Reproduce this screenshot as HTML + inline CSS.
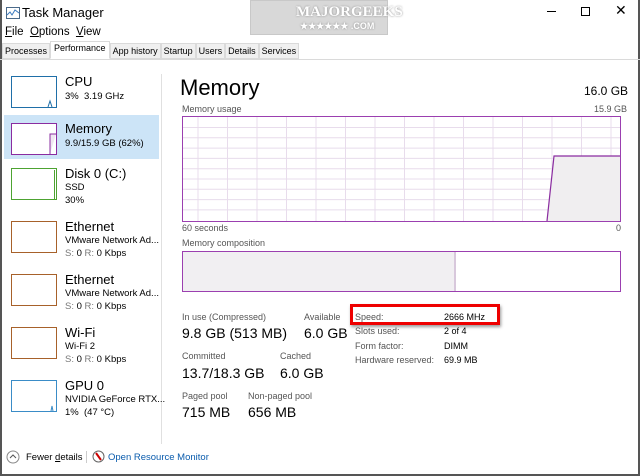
<!DOCTYPE html>
<html><head><style>
*{margin:0;padding:0;box-sizing:border-box}
body{width:640px;height:476px;background:#fff;font-family:"Liberation Sans",sans-serif;color:#000;position:relative;overflow:hidden}
.a{position:absolute;white-space:nowrap}
.th{position:absolute;left:11px;width:46px;height:32px;border:1px solid}
.t1{font-size:13px}
.t2{font-size:9.5px}
.lbl{font-size:9px;color:#555}
.big{font-size:14px}
.g{color:#777}
</style></head><body>
<div class="a" style="left:0;top:0;width:2px;height:476px;background:#555"></div>
<div class="a" style="right:0;top:0;width:2px;height:476px;background:#555"></div>
<div class="a" style="left:0;bottom:0;width:640px;height:2px;background:#555"></div>
<!-- title -->
<svg class="a" style="left:6px;top:7px" width="14" height="12"><rect x="0.5" y="0.5" width="13" height="11" fill="none" stroke="#4a6a8a"/><path d="M1 8 L4 5 L6 8 L9 3 L13 6" stroke="#3a7ac0" fill="none"/></svg>
<div class="a" style="left:22px;top:5px;font-size:13px">Task Manager</div>
<div class="a" style="left:250px;top:0;width:138px;height:35px;background:#d8d8d8;border:1px solid #c8c8c8"></div>
<div class="a" style="left:296px;top:4px;font-size:15px;font-weight:bold;color:#fff;font-family:'Liberation Serif',serif;text-shadow:0 0 2px #888">MAJORGEEKS</div>
<div class="a" style="left:300px;top:21px;font-size:9px;font-weight:bold;color:#fff;text-shadow:0 0 2px #888">★★★★★★ .COM</div>
<div class="a" style="left:547px;top:11px;width:9px;height:1px;background:#000"></div>
<div class="a" style="left:581px;top:7px;width:9px;height:9px;border:1px solid #000"></div>
<div class="a" style="left:615px;top:2px;font-size:14px">✕</div>
<!-- menu -->
<div class="a" style="left:5px;top:26px;font-size:11.5px"><u>F</u>ile &nbsp;<u>O</u>ptions &nbsp;<u>V</u>iew</div>
<!-- tabs -->
<div class="a" style="left:0;top:59px;width:640px;height:1px;background:#dadada"></div>
<div class="a" style="left:2px;top:43px;font-size:9px;display:flex">
<span style="border:1px solid #dadada;padding:2px 2px;background:#f0f0f0">Processes</span>
<span style="border:1px solid #dadada;border-bottom:1px solid #fff;padding:1px 3px 3px;background:#fff;margin-top:-2px">Performance</span>
<span style="border:1px solid #dadada;padding:2px 2px;background:#f0f0f0">App history</span>
<span style="border:1px solid #dadada;padding:2px 2px;background:#f0f0f0">Startup</span>
<span style="border:1px solid #dadada;padding:2px 2px;background:#f0f0f0">Users</span>
<span style="border:1px solid #dadada;padding:2px 2px;background:#f0f0f0">Details</span>
<span style="border:1px solid #dadada;padding:2px 2px;background:#f0f0f0">Services</span>
</div>
<!-- left -->
<div class="a" style="left:161px;top:74px;width:1px;height:370px;background:#e0e0e0"></div>
<div class="a" style="left:4px;top:115px;width:155px;height:44px;background:#cce4f7"></div>
<div class="th" style="top:76px;border-color:#1f6fa8"><svg width="44" height="30" class="a"><path d="M36 30 L38 24 L40 30" stroke="#1f6fa8" fill="none"/></svg></div>
<div class="a t1" style="left:65px;top:74px">CPU</div><div class="a t2" style="left:65px;top:91px">3% &nbsp;3.19 GHz</div>
<div class="th" style="top:123px;border-color:#8a2ca0;background:#fff"><svg width="44" height="30" class="a"><path d="M38 30 L38 10 L44 10" stroke="#8a2ca0" fill="#f0e6f2"/></svg></div>
<div class="a t1" style="left:65px;top:121px">Memory</div><div class="a t2" style="left:65px;top:138px">9.9/15.9 GB (62%)</div>
<div class="th" style="top:168px;border-color:#4da331"><div class="a" style="left:42px;top:1px;width:1px;height:29px;background:#4da331"></div></div>
<div class="a t1" style="left:65px;top:166px">Disk 0 (C:)</div><div class="a t2" style="left:65px;top:182px">SSD</div><div class="a t2" style="left:65px;top:195px">30%</div>
<div class="th" style="top:221px;border-color:#a7612a"></div>
<div class="a t1" style="left:65px;top:219px">Ethernet</div><div class="a t2" style="left:65px;top:235px">VMware Network Ad...</div><div class="a t2" style="left:65px;top:248px"><span class="g">S:</span> 0 <span class="g">R:</span> 0 Kbps</div>
<div class="th" style="top:274px;border-color:#a7612a"></div>
<div class="a t1" style="left:65px;top:272px">Ethernet</div><div class="a t2" style="left:65px;top:288px">VMware Network Ad...</div><div class="a t2" style="left:65px;top:301px"><span class="g">S:</span> 0 <span class="g">R:</span> 0 Kbps</div>
<div class="th" style="top:327px;border-color:#a7612a"></div>
<div class="a t1" style="left:65px;top:325px">Wi-Fi</div><div class="a t2" style="left:65px;top:341px">Wi-Fi 2</div><div class="a t2" style="left:65px;top:354px"><span class="g">S:</span> 0 <span class="g">R:</span> 0 Kbps</div>
<div class="th" style="top:380px;border-color:#3a8cc7"><svg width="44" height="30" class="a"><path d="M39 30 L40 25 L41 30" stroke="#3a8cc7" fill="none"/></svg></div>
<div class="a t1" style="left:65px;top:378px">GPU 0</div><div class="a t2" style="left:65px;top:394px">NVIDIA GeForce RTX...</div><div class="a t2" style="left:65px;top:407px">1% &nbsp;(47 °C)</div>
<!-- footer -->
<svg class="a" style="left:6px;top:450px" width="14" height="14"><circle cx="7" cy="7" r="6" fill="none" stroke="#888"/><path d="M4 8 L7 5 L10 8" stroke="#555" fill="none"/></svg>
<div class="a" style="left:26px;top:452px;font-size:9.5px">Fewer <u>d</u>etails</div>
<div class="a" style="left:86px;top:451px;width:1px;height:12px;background:#ccc"></div>
<svg class="a" style="left:92px;top:450px" width="13" height="13"><circle cx="6.5" cy="6.5" r="5.5" fill="#fff" stroke="#666"/><path d="M4 3 L9 10" stroke="#c00" stroke-width="2"/></svg>
<div class="a" style="left:108px;top:452px;font-size:9.5px;color:#0b5cad">Open Resource Monitor</div>
<!-- right -->
<div class="a" style="left:180px;top:75px;font-size:22px">Memory</div>
<div class="a" style="left:584px;top:84px;font-size:12px">16.0 GB</div>
<div class="a lbl" style="left:182px;top:104px">Memory usage</div>
<div class="a lbl" style="left:594px;top:104px">15.9 GB</div>
<svg class="a" style="left:182px;top:116px" width="439" height="106">
<g stroke="#e8dcec" stroke-width="1">
<path d="M16 0V106M45.5 0V106M75 0V106M104.5 0V106M134 0V106M163.5 0V106M193 0V106M222.5 0V106M252 0V106M281.5 0V106M311 0V106M340.5 0V106M370 0V106M399.5 0V106M429 0V106"/>
<path d="M0 11.5H439M0 21.8H439M0 32.1H439M0 42.4H439M0 52.7H439M0 63H439M0 73.3H439M0 83.6H439M0 93.9H439"/>
</g>
<path d="M365 105 L372 40 L439 40 L439 105Z" fill="#f0eef0"/>
<path d="M365 105 L372 40 L439 40" stroke="#8a2ca0" fill="none" stroke-width="1.2"/>
<rect x="0.5" y="0.5" width="438" height="105" fill="none" stroke="#9b3fb0"/>
</svg>
<div class="a lbl" style="left:182px;top:223px">60 seconds</div>
<div class="a lbl" style="left:616px;top:223px">0</div>
<div class="a lbl" style="left:182px;top:238px">Memory composition</div>
<div class="a" style="left:182px;top:251px;width:439px;height:41px;border:1px solid #9b3fb0"></div>
<div class="a" style="left:183px;top:252px;width:271px;height:39px;background:#f1eff2"></div>
<div class="a" style="left:454px;top:252px;width:2px;height:39px;background:#d8c8dc"></div>
<div class="a lbl" style="left:182px;top:312px">In use (Compressed)</div>
<div class="a big" style="left:182px;top:325px">9.8 GB (513 MB)</div>
<div class="a lbl" style="left:304px;top:312px">Available</div>
<div class="a big" style="left:304px;top:325px">6.0 GB</div>
<div class="a lbl" style="left:182px;top:351px">Committed</div>
<div class="a big" style="left:182px;top:365px">13.7/18.3 GB</div>
<div class="a lbl" style="left:280px;top:351px">Cached</div>
<div class="a big" style="left:280px;top:365px">6.0 GB</div>
<div class="a lbl" style="left:182px;top:391px">Paged pool</div>
<div class="a big" style="left:182px;top:404px">715 MB</div>
<div class="a lbl" style="left:248px;top:391px">Non-paged pool</div>
<div class="a big" style="left:248px;top:404px">656 MB</div>
<div class="a lbl" style="left:355px;top:312px">Speed:</div><div class="a" style="left:444px;top:312px;font-size:9px">2666 MHz</div>
<div class="a lbl" style="left:355px;top:326px">Slots used:</div><div class="a" style="left:444px;top:326px;font-size:9px">2 of 4</div>
<div class="a lbl" style="left:355px;top:341px">Form factor:</div><div class="a" style="left:444px;top:341px;font-size:9px">DIMM</div>
<div class="a lbl" style="left:355px;top:355px">Hardware reserved:</div><div class="a" style="left:444px;top:355px;font-size:9px">69.9 MB</div>
<div class="a" style="left:350px;top:304px;width:150px;height:21px;border:3px solid #e00;box-shadow:1px 2px 3px rgba(0,0,0,.4)"></div>
</body></html>
